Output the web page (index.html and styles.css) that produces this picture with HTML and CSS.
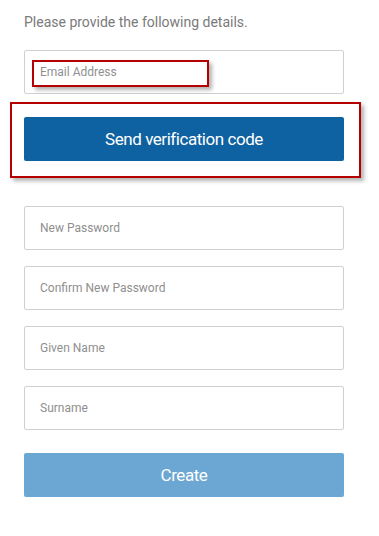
FILE: index.html
```html
<!DOCTYPE html>
<html lang="en">
<head>
<meta charset="utf-8">
<title>Sign up</title>
<link rel="stylesheet" href="styles.css">
</head>
<body>
<main class="form">
  <p class="intro">Please provide the following details.</p>
  <div class="field-wrap">
    <input class="field" type="email" placeholder="Email Address">
    <span class="mark mark-small"></span>
  </div>
  <div class="btn-wrap">
    <button class="btn btn-send" type="button">Send verification code</button>
    <span class="mark mark-large"></span>
  </div>
  <div class="fields">
    <input class="field" type="password" placeholder="New Password">
    <input class="field" type="password" placeholder="Confirm New Password">
    <input class="field" type="text" placeholder="Given Name">
    <input class="field" type="text" placeholder="Surname">
  </div>
  <button class="btn btn-create" type="button">Create</button>
</main>
</body>
</html>
```
FILE: styles.css
```css
html, body {
  margin: 0;
  padding: 0;
  background: #ffffff;
}
body {
  font-family: Roboto, "Liberation Sans", Arial, sans-serif;
}
.form {
  display: flex;
  flex-direction: column;
  width: 320px;
  padding: 12px 0 0 24px;
}
.intro {
  margin: 0;
  height: 20px;
  line-height: 20px;
  font-size: 14px;
  color: #7a7a7a;
}
.field-wrap {
  position: relative;
  margin-top: 18px;
}
.field {
  display: block;
  box-sizing: border-box;
  width: 320px;
  height: 44px;
  margin: 0;
  padding: 0 15px;
  border: 1px solid #d0d0d0;
  border-radius: 2px;
  background: #fff;
  font-family: Roboto, "Liberation Sans", Arial, sans-serif;
  font-size: 12px;
  color: #333;
  outline: none;
}
.field::placeholder {
  color: #8f8f8f;
  opacity: 1;
}
.btn-wrap {
  position: relative;
  margin-top: 23px;
}
.btn {
  display: block;
  box-sizing: border-box;
  width: 320px;
  height: 44px;
  border: none;
  border-radius: 2px;
  color: #fff;
  font-family: Roboto, "Liberation Sans", Arial, sans-serif;
  font-size: 17px;
  letter-spacing: -0.45px;
  padding: 0;
}
.btn-send {
  background: #0f62a1;
}
.btn-create {
  margin-top: 23px;
  background: #6ca7d4;
}
.fields {
  display: flex;
  flex-direction: column;
  gap: 16px;
  margin-top: 45px;
}
.mark {
  position: absolute;
  box-sizing: border-box;
  border-style: solid;
  border-color: #b40000;
  pointer-events: none;
  box-shadow: 3px 3px 4px rgba(0, 0, 0, 0.3);
}
.mark-small {
  left: 8px;
  top: 10px;
  width: 177px;
  height: 27px;
  border-width: 2px;
}
.mark-large {
  left: -14px;
  top: -15px;
  width: 351px;
  height: 76px;
  border-width: 2px;
}
```
